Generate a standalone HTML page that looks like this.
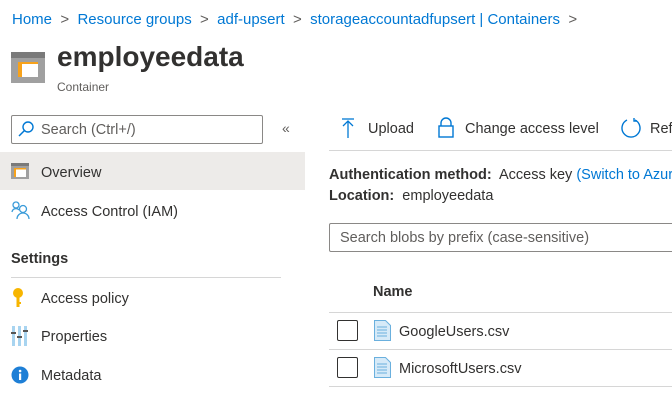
<!DOCTYPE html>
<html><head><style>
*{margin:0;padding:0;box-sizing:border-box}
html,body{width:672px;height:410px;overflow:hidden}
body{background:#fff;font-family:"Liberation Sans",sans-serif;color:#323130;position:relative}
.a{position:absolute;white-space:nowrap}
.b{color:#0078d4;font-size:15px}
.n{font-size:14.5px}
.l{position:absolute;background:#d6d6d6;height:1px}
.cb{position:absolute;width:21px;height:21px;border:1px solid #323130;border-radius:2px}
</style></head><body>
<div class="a b" style="left:12px;top:11px">Home <span style="color:#605e5c">&nbsp;&gt;&nbsp;</span> Resource groups <span style="color:#605e5c">&nbsp;&gt;&nbsp;</span> adf-upsert <span style="color:#605e5c">&nbsp;&gt;&nbsp;</span> storageaccountadfupsert | Containers <span style="color:#605e5c">&nbsp;&gt;</span></div>
<svg class="a" style="left:11px;top:52px" width="35" height="32"><rect x="0" y="0" width="34" height="31" fill="#a0a0a0"/><rect x="0" y="0" width="34" height="6" fill="#7a7a7a"/><rect x="7" y="10" width="20" height="15" fill="#fff"/><rect x="7" y="10" width="4" height="15" fill="#f7a21b"/><rect x="7" y="10" width="20" height="2" fill="#f7a21b"/></svg>
<div class="a" style="left:57px;top:41px;font-size:28px;font-weight:bold;color:#323130">employeedata</div>
<div class="a" style="left:57px;top:80px;font-size:12px;color:#605e5c">Container</div>
<div class="a" style="left:11px;top:115px;width:252px;height:29px;border:1px solid #8a8886;border-radius:2px"></div>
<svg class="a" style="left:18px;top:121px" width="16" height="16"><circle cx="10" cy="6" r="5" fill="none" stroke="#0078d4" stroke-width="1.4"/><line x1="6.5" y1="9.5" x2="1" y2="15" stroke="#0078d4" stroke-width="1.5"/></svg>
<div class="a n" style="left:41px;top:122px;color:#605e5c">Search (Ctrl+/)</div>
<div class="a" style="left:282px;top:120px;font-size:14px;color:#605e5c">«</div>
<div class="a" style="left:0;top:152px;width:305px;height:38px;background:#edebe9"></div>
<svg class="a" style="left:11px;top:163px" width="18" height="16"><rect width="18" height="16" fill="#a0a0a0"/><rect width="18" height="3" fill="#7a7a7a"/><rect x="3" y="5" width="12" height="9" fill="#fff"/><rect x="3" y="5" width="2" height="9" fill="#f7a21b"/><rect x="3" y="5" width="12" height="1.5" fill="#f7a21b"/></svg>
<div class="a n" style="left:41px;top:165px">Overview</div>
<svg class="a" style="left:11px;top:201px" width="20" height="18" fill="none" stroke="#3a9bd9" stroke-width="1.3"><circle cx="5" cy="4" r="3"/><path d="M1 11a4 4 0 0 1 7-2"/><circle cx="12" cy="8" r="3.5"/><path d="M6 18a6 6 0 0 1 12 0"/></svg>
<div class="a n" style="left:41px;top:204px">Access Control (IAM)</div>
<div class="a n" style="left:11px;top:251px;font-weight:bold;color:#323130">Settings</div>
<div class="l" style="left:11px;top:277px;width:270px"></div>
<svg class="a" style="left:12px;top:288px" width="12" height="20"><circle cx="6" cy="5" r="5" fill="#f7b500"/><rect x="4.5" y="8" width="3" height="11" fill="#f7b500"/><rect x="7" y="14" width="2" height="2" fill="#f7b500"/></svg>
<div class="a n" style="left:41px;top:291px">Access policy</div>
<svg class="a" style="left:11px;top:326px" width="18" height="20"><rect x="1" y="0" width="3" height="20" fill="#a8d4f0"/><rect x="7" y="0" width="3" height="20" fill="#a8d4f0"/><rect x="13" y="0" width="3" height="20" fill="#a8d4f0"/><rect x="0" y="6" width="5" height="2" fill="#555"/><rect x="6" y="10" width="5" height="2" fill="#555"/><rect x="12" y="4" width="5" height="2" fill="#555"/></svg>
<div class="a n" style="left:41px;top:329px">Properties</div>
<svg class="a" style="left:11px;top:366px" width="18" height="18"><circle cx="9" cy="9" r="8.5" fill="#1e7fd6"/><rect x="8" y="7.5" width="2.2" height="6.5" fill="#fff"/><circle cx="9.1" cy="5" r="1.3" fill="#fff"/></svg>
<div class="a n" style="left:41px;top:368px">Metadata</div>

<svg class="a" style="left:341px;top:118px" width="14" height="20" fill="none" stroke="#0078d4" stroke-width="1.3"><line x1="1" y1="1" x2="13" y2="1"/><line x1="7" y1="3" x2="7" y2="20"/><path d="M2 8l5-5 5 5"/></svg>
<div class="a n" style="left:368px;top:121px">Upload</div>
<svg class="a" style="left:438px;top:117px" width="16" height="21" fill="none" stroke="#0078d4" stroke-width="1.4"><path d="M3 9V6a5 5 0 0 1 10 0v3"/><rect x="1" y="9" width="14" height="11"/></svg>
<div class="a n" style="left:465px;top:121px">Change access level</div>
<svg class="a" style="left:620px;top:117px" width="22" height="22" fill="none" stroke="#0078d4" stroke-width="1.4"><path d="M7 3A9 9 0 1 0 15 3"/><path d="M14 1v3h3" /></svg>
<div class="a n" style="left:650px;top:121px">Refresh</div>
<div class="l" style="left:329px;top:150px;width:343px"></div>
<div class="a n" style="left:329px;top:167px"><b>Authentication method:</b>&nbsp; Access key <span style="color:#0078d4">(Switch to Azure AD User Account)</span></div>
<div class="a n" style="left:329px;top:188px"><b>Location:</b>&nbsp; employeedata</div>
<div class="a" style="left:329px;top:223px;width:360px;height:29px;border:1px solid #8a8886;border-radius:2px"></div>
<div class="a n" style="left:340px;top:230px;color:#605e5c">Search blobs by prefix (case-sensitive)</div>
<div class="a n" style="left:373px;top:284px;font-weight:bold">Name</div>
<div class="l" style="left:329px;top:312px;width:343px"></div>
<div class="cb" style="left:337px;top:320px"></div>
<svg class="a" style="left:374px;top:320px" width="17" height="21"><path d="M0.5 0.5h11l5 5v15h-16z" fill="#d6eaf8" stroke="#6ab0de"/><g stroke="#6ab0de"><line x1="3" y1="7" x2="13" y2="7"/><line x1="3" y1="10" x2="13" y2="10"/><line x1="3" y1="13" x2="13" y2="13"/><line x1="3" y1="16" x2="13" y2="16"/></g></svg>
<div class="a n" style="left:399px;top:324px">GoogleUsers.csv</div>
<div class="l" style="left:329px;top:349px;width:343px"></div>
<div class="cb" style="left:337px;top:357px"></div>
<svg class="a" style="left:374px;top:357px" width="17" height="21"><path d="M0.5 0.5h11l5 5v15h-16z" fill="#d6eaf8" stroke="#6ab0de"/><g stroke="#6ab0de"><line x1="3" y1="7" x2="13" y2="7"/><line x1="3" y1="10" x2="13" y2="10"/><line x1="3" y1="13" x2="13" y2="13"/><line x1="3" y1="16" x2="13" y2="16"/></g></svg>
<div class="a n" style="left:399px;top:361px">MicrosoftUsers.csv</div>
<div class="l" style="left:329px;top:386px;width:343px"></div>
</body></html>
